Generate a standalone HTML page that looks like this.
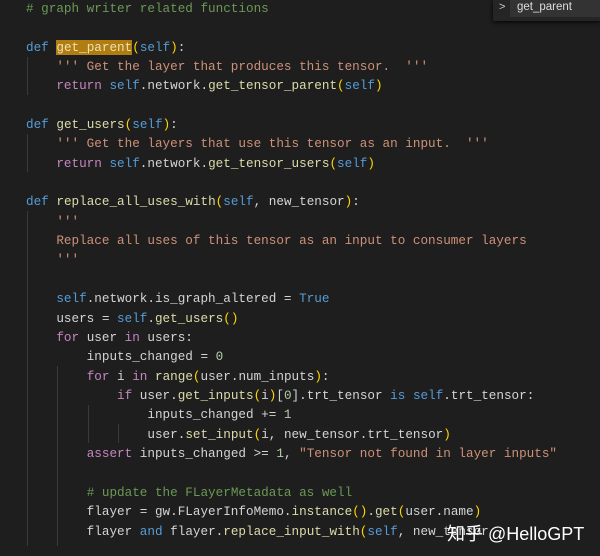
<!DOCTYPE html>
<html><head><style>
body{margin:0;width:600px;height:556px;background:#1e1e1e;overflow:hidden;position:relative;font-family:"Liberation Mono","DejaVu Sans Mono",monospace;font-size:12.65px;color:#d4d4d4}
.l{position:absolute;left:26px;white-space:pre;height:19px;line-height:19px}
.c{color:#6a9955}.k{color:#569cd6}.f{color:#dcdcaa}.s{color:#ce9178}.p{color:#c586c0}.n{color:#b5cea8}.b{color:#ffd700}.v{color:#d4d4d4}
.g{position:absolute;width:1px;background:#3a3a3a}
.hl{background:#b07d12;color:#f0e0b0}
</style></head><body>
<div class="g" style="left:27px;top:57px;height:38px"></div>
<div class="g" style="left:27px;top:134px;height:38px"></div>
<div class="g" style="left:27px;top:211px;height:335px"></div>
<div class="g" style="left:57px;top:366px;height:180px"></div>
<div class="g" style="left:88px;top:405px;height:38px"></div>
<div class="g" style="left:118px;top:424px;height:19px"></div>
<div class="l" style="top:-1px"><span class="c"># graph writer related functions</span></div>
<div class="l" style="top:38px"><span class="k">def</span> <span class="f hl">get_parent</span><span class="b">(</span><span class="k">self</span><span class="b">)</span>:</div>
<div class="l" style="top:57px"><span class="s">    ''' Get the layer that produces this tensor.  '''</span></div>
<div class="l" style="top:76px">    <span class="p">return</span> <span class="k">self</span>.network.<span class="f">get_tensor_parent</span><span class="b">(</span><span class="k">self</span><span class="b">)</span></div>
<div class="l" style="top:115px"><span class="k">def</span> <span class="f">get_users</span><span class="b">(</span><span class="k">self</span><span class="b">)</span>:</div>
<div class="l" style="top:134px"><span class="s">    ''' Get the layers that use this tensor as an input.  '''</span></div>
<div class="l" style="top:154px">    <span class="p">return</span> <span class="k">self</span>.network.<span class="f">get_tensor_users</span><span class="b">(</span><span class="k">self</span><span class="b">)</span></div>
<div class="l" style="top:192px"><span class="k">def</span> <span class="f">replace_all_uses_with</span><span class="b">(</span><span class="k">self</span>, new_tensor<span class="b">)</span>:</div>
<div class="l" style="top:212px"><span class="s">    '''</span></div>
<div class="l" style="top:231px"><span class="s">    Replace all uses of this tensor as an input to consumer layers</span></div>
<div class="l" style="top:250px"><span class="s">    '''</span></div>
<div class="l" style="top:289px">    <span class="k">self</span>.network.is_graph_altered = <span class="k">True</span></div>
<div class="l" style="top:309px">    users = <span class="k">self</span>.<span class="f">get_users</span><span class="b">()</span></div>
<div class="l" style="top:328px">    <span class="p">for</span> user <span class="p">in</span> users:</div>
<div class="l" style="top:347px">        inputs_changed = <span class="n">0</span></div>
<div class="l" style="top:367px">        <span class="p">for</span> i <span class="p">in</span> <span class="f">range</span><span class="b">(</span>user.num_inputs<span class="b">)</span>:</div>
<div class="l" style="top:386px">            <span class="p">if</span> user.<span class="f">get_inputs</span><span class="b">(</span>i<span class="b">)</span>[<span class="n">0</span>].trt_tensor <span class="k">is</span> <span class="k">self</span>.trt_tensor:</div>
<div class="l" style="top:405px">                inputs_changed += <span class="n">1</span></div>
<div class="l" style="top:425px">                user.<span class="f">set_input</span><span class="b">(</span>i, new_tensor.trt_tensor<span class="b">)</span></div>
<div class="l" style="top:444px">        <span class="p">assert</span> inputs_changed &gt;= <span class="n">1</span>, <span class="s">"Tensor not found in layer inputs"</span></div>
<div class="l" style="top:483px">        <span class="c"># update the FLayerMetadata as well</span></div>
<div class="l" style="top:502px">        flayer = gw.FLayerInfoMemo.<span class="f">instance</span><span class="b">()</span>.<span class="f">get</span><span class="b">(</span>user.name<span class="b">)</span></div>
<div class="l" style="top:522px">        flayer <span class="k">and</span> flayer.<span class="f">replace_input_with</span><span class="b">(</span><span class="k">self</span>, new_tensor</div>
<div style="position:absolute;left:447px;top:520px;font-family:'Liberation Sans','Noto Sans CJK SC',sans-serif;font-size:18px;color:#fff;white-space:nowrap">知乎 @HelloGPT</div>
<div style="position:absolute;left:493px;top:0;width:107px;height:21px;background:#252526;box-shadow:0 1px 4px #000"></div>
<div style="position:absolute;left:499px;top:1px;color:#ccc;font-family:'Liberation Sans',sans-serif;font-size:11px">&gt;</div>
<div style="position:absolute;left:510px;top:0;width:90px;height:17px;background:#333;font-family:'Liberation Sans',sans-serif;font-size:11.5px;color:#ddd;line-height:15px;padding-left:7px;box-sizing:border-box">get_parent</div>
</body></html>
